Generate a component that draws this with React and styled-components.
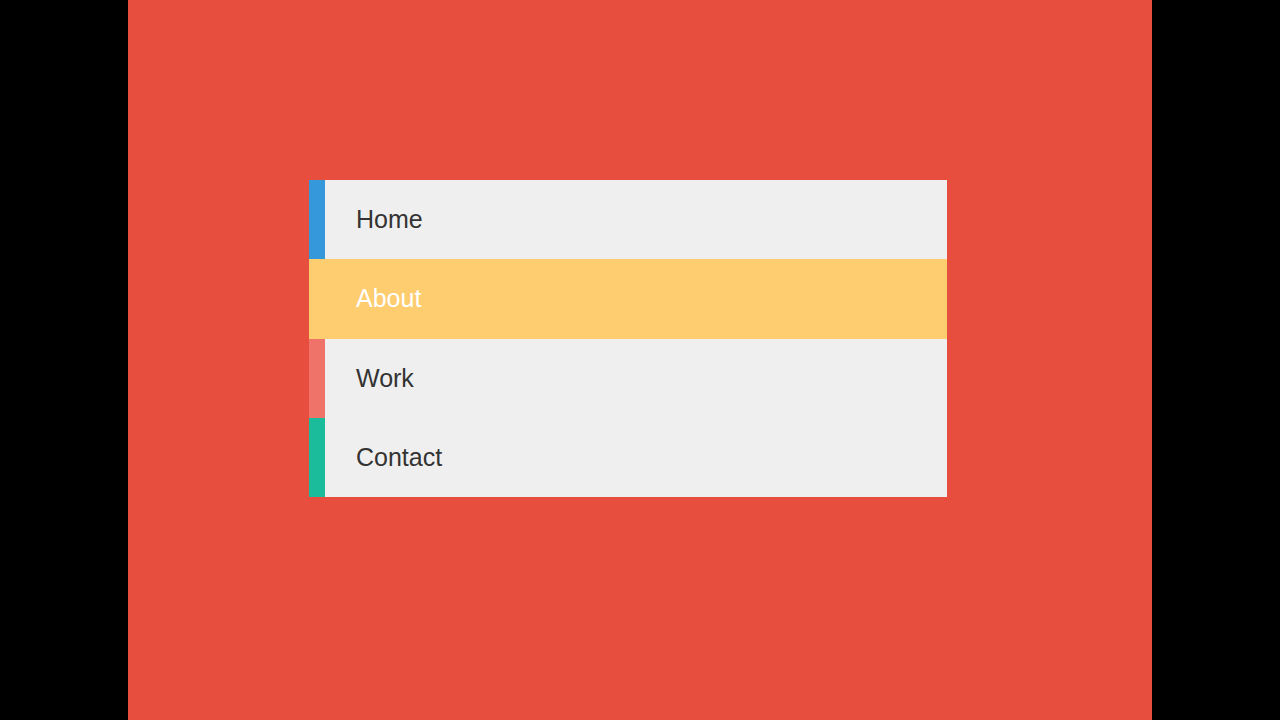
import React from 'react';
import styled, { createGlobalStyle } from 'styled-components';

const Global = createGlobalStyle`
  html, body {
    margin: 0;
    padding: 0;
    background: #000;
  }
`

const Stage = styled.div`
  width: 1024px;
  height: 720px;
  margin: 0 auto;
  background: #e84e3d;
  padding: 180px 0 0 181px;
  box-sizing: border-box;
`

const Menu = styled.ul`
  list-style: none;
  margin: 0;
  padding: 0;
  width: 638px;
  display: flex;
  flex-direction: column;
`

const Item = styled.li`
  height: 79.3px;
  display: flex;
  align-items: center;
  box-sizing: border-box;
  padding-left: 31px;
  border-left: 16px solid ${(props) => props.active ? '#fecd6f' : props.color};
  background: ${(props) => props.active ? '#fecd6f' : '#efefef'};
  color: ${(props) => props.active ? '#fff' : '#333'};
  font-family: 'Liberation Sans', Arial, sans-serif;
  font-size: 25px;
  cursor: pointer;
`

const items = [
  { label: 'Home', color: '#3498db' },
  { label: 'About', color: '#fecd6f', active: true },
  { label: 'Work', color: '#f0736a' },
  { label: 'Contact', color: '#1abc9c' },
]

export default function App() {
  return (
    <>
      <Global />
      <Stage>
        <Menu>
          {items.map((item) => (
            <Item key={item.label} color={item.color} active={item.active}>
              {item.label}
            </Item>
          ))}
        </Menu>
      </Stage>
    </>
  )
}
